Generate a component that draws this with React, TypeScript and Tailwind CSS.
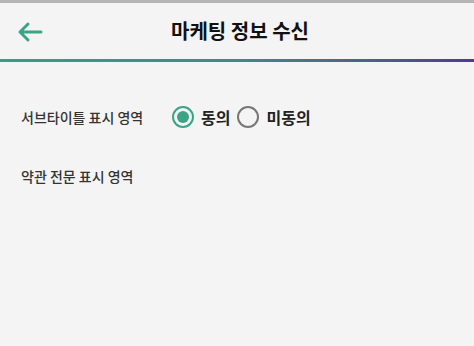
import { useState } from 'react';

const font = { fontFamily: '"Noto Sans CJK KR", "Noto Sans", sans-serif' };

function Radio({ checked, label, onSelect }: { checked: boolean; label: string; onSelect: () => void }) {
  return (
    <button type="button" onClick={onSelect} className="flex items-center gap-[7px]">
      <span
        className={
          checked
            ? 'flex h-[22px] w-[22px] items-center justify-center rounded-full border-[2.5px] border-[#3aa584]'
            : 'flex h-[22px] w-[22px] items-center justify-center rounded-full border-[2px] border-[#777]'
        }
      >
        {checked && <span className="h-[12px] w-[12px] rounded-full bg-[#3aa584]" />}
      </span>
      <span className="text-[16px] font-bold text-[#222]">{label}</span>
    </button>
  );
}

export default function App() {
  const [agree, setAgree] = useState(true);

  return (
    <div className="flex h-[346px] w-[474px] flex-col bg-[#f4f4f4]" style={font}>
      <div className="h-[3px] bg-[#b5b5b5]" />
      <header className="relative flex h-[56px] items-center justify-center">
        <button type="button" className="absolute left-[16px] top-[18px] text-[#3aa584]">
          <svg width="28" height="22" viewBox="0 0 28 22" fill="none" stroke="currentColor" strokeWidth="3" strokeLinecap="round" strokeLinejoin="round">
            <path d="M25 11H4M12 3L4 11l8 8" />
          </svg>
        </button>
        <h1 className="pl-[6px] text-[20px] font-semibold text-[#111]">마케팅 정보 수신</h1>
      </header>
      <div className="h-[3px] bg-gradient-to-r from-[#3c9b84] via-[#3e8a86] to-[#4f3a8f]" />
      <main className="flex flex-col px-[21px] pt-[43px]">
        <div className="flex items-center">
          <span className="w-[151px] text-[14px] font-medium text-[#333]">서브타이틀 표시 영역</span>
          <div className="flex items-center gap-[7px]">
            <Radio checked={agree} label="동의" onSelect={() => setAgree(true)} />
            <Radio checked={!agree} label="미동의" onSelect={() => setAgree(false)} />
          </div>
        </div>
        <p className="mt-[37px] text-[14px] font-medium text-[#333]">약관 전문 표시 영역</p>
      </main>
    </div>
  );
}
